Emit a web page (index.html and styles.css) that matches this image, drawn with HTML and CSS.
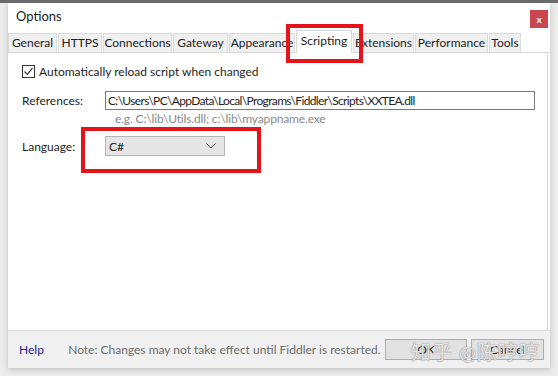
FILE: index.html
```html
<!DOCTYPE html>
<html>

<head>
    <title>Options</title>
    <meta name="viewport" content="width=device-width, initial-scale=1.0">
    <link rel="stylesheet" href="styles.css">
</head>

<body>
    <div class="window">
        <div class="titlebar">
            <span class="title">Options</span>
            <span class="close">x</span>
        </div>

        <div class="tabs">
            <span class="tab">General</span>
            <span class="tab">HTTPS</span>
            <span class="tab">Connections</span>
            <span class="tab">Gateway</span>
            <span class="tab">Appearance</span>
            <span class="tab active">Scripting</span>
            <span class="tab">Extensions</span>
            <span class="tab">Performance</span>
            <span class="tab">Tools</span>
        </div>

        <div class="panel">
            <label class="check-row">
                <span class="checkbox">
                    <svg width="11" height="11" viewBox="0 0 11 11">
                        <path d="M1.5 5.5 L4.3 8.3 L9.5 2.2" fill="none" stroke="#333" stroke-width="1.2"/>
                    </svg>
                </span>
                Automatically reload script when changed
            </label>

            <div class="field-row">
                <span class="field-label">References:</span>
                <span class="textbox">C:\Users\PC\AppData\Local\Programs\Fiddler\Scripts\XXTEA.dll</span>
            </div>
            <div class="hint">e.g. C:\lib\Utils.dll; c:\lib\myappname.exe</div>

            <div class="field-row lang-row">
                <span class="field-label">Language:</span>
                <span class="combo">
                    C#
                    <svg width="10" height="6" viewBox="0 0 10 6">
                        <path d="M0.5 0.5 L5 5 L9.5 0.5" fill="none" stroke="#444" stroke-width="1"/>
                    </svg>
                </span>
            </div>
        </div>

        <div class="footer">
            <span class="help">Help</span>
            <span class="note">Note: Changes may not take effect until Fiddler is restarted.</span>
            <span class="button ok">OK</span>
            <span class="button">Cancel</span>
        </div>

        <div class="mark mark-tab"></div>
        <div class="mark mark-lang"></div>
        <div class="watermark">知乎 @陈哼哼</div>
    </div>
</body>

</html>
```

FILE: styles.css
```css
body {
    margin: 0;
    padding: 0;
    width: 558px;
    height: 376px;
    overflow: hidden;
    background-color: #ececec;
    border-top: 3px solid #6b6b6b;
    box-sizing: border-box;
    font-family: Lato, "Noto Sans CJK SC", sans-serif;
    font-size: 12px;
    color: #1e1e1e;
}

.window {
    position: relative;
    margin: 0 8px;
    height: 365px;
    background-color: #fff;
    box-shadow: 0 2px 6px rgba(0, 0, 0, 0.18);
    display: flex;
    flex-direction: column;
}

.titlebar {
    height: 29px;
    display: flex;
    align-items: center;
    justify-content: space-between;
    padding-left: 8px;
    padding-right: 2px;
}

.title {
    font-size: 13px;
    color: #222;
    margin-top: -3px;
}

.close {
    width: 18px;
    height: 18px;
    background-color: #c9474d;
    color: #fff;
    font-size: 10px;
    font-weight: bold;
    display: flex;
    align-items: center;
    justify-content: center;
    margin-top: 2px;
}

.tabs {
    display: flex;
    height: 20px;
    align-items: flex-end;
    border-bottom: 1px solid #d9d9d9;
}

.tab {
    height: 19px;
    line-height: 18px;
    background-color: #f0f0f0;
    border: 1px solid #dadada;
    border-bottom: none;
    margin-right: 1px;
    box-sizing: border-box;
    white-space: nowrap;
    text-align: center;
    color: #222;
}

.tab:nth-child(1) { width: 49px; }
.tab:nth-child(2) { width: 44px; }
.tab:nth-child(3) { width: 69px; }
.tab:nth-child(4) { width: 55px; }
.tab:nth-child(5) { width: 66px; }
.tab:nth-child(6) { width: 56px; }
.tab:nth-child(7) { width: 61px; }
.tab:nth-child(8) { width: 73px; }
.tab:nth-child(9) { width: 32px; }

.tab.active {
    height: 23px;
    line-height: 20px;
    background-color: #fff;
    margin-bottom: -1px;
}

.panel {
    flex: 1;
    padding: 10px 12px 0 14px;
    border-right: 1px solid #d4d4d4;
    margin-right: 2px;
}

.check-row {
    display: flex;
    align-items: center;
    gap: 4px;
    height: 16px;
    margin-bottom: 11px;
}

.checkbox {
    width: 11px;
    height: 11px;
    border: 1px solid #333;
    display: flex;
    align-items: center;
    justify-content: center;
}

.field-row {
    display: flex;
    align-items: center;
    height: 20px;
}

.field-label {
    width: 83px;
}

.textbox {
    flex: 1;
    height: 19px;
    line-height: 18px;
    border: 1px solid #7a7a7a;
    box-sizing: border-box;
    padding-left: 2px;
    letter-spacing: -0.65px;
    white-space: nowrap;
    overflow: hidden;
}

.hint {
    color: #8a8a8a;
    margin-left: 93px;
    margin-top: 1px;
    height: 16px;
    letter-spacing: -0.15px;
}

.lang-row {
    margin-top: 9px;
}

.combo {
    width: 120px;
    height: 20px;
    box-sizing: border-box;
    background-color: #e5e5e5;
    border: 1px solid #b5b5b5;
    display: flex;
    align-items: center;
    justify-content: space-between;
    padding: 0 8px 0 3px;
}

.footer {
    height: 37px;
    background-color: #f0f0f0;
    border-top: 1px solid #dcdcdc;
    display: flex;
    align-items: center;
    padding: 0 6px 0 11px;
}

.help {
    color: #1c1c9a;
    width: 50px;
}

.note {
    color: #6d6d6d;
    flex: 1;
    white-space: nowrap;
}

.button {
    width: 74px;
    height: 21px;
    box-sizing: border-box;
    border: 1px solid #adadad;
    background-color: #e1e1e1;
    display: flex;
    align-items: center;
    justify-content: center;
    margin-left: 4px;
}

.button.ok {
    width: 84px;
}

.mark {
    position: absolute;
    border: 4px solid #e3151a;
    box-sizing: border-box;
}

.mark-tab {
    left: 278px;
    top: 21px;
    width: 77px;
    height: 39px;
}

.mark-lang {
    left: 73px;
    top: 124px;
    width: 180px;
    height: 46px;
}

.watermark {
    position: absolute;
    left: 403px;
    top: 334px;
    font-size: 20px;
    color: rgba(255, 255, 255, 0.8);
    text-shadow: 0 0 1px #8a8a8a, 0 0 1px #8a8a8a;
    letter-spacing: 1px;
    white-space: nowrap;
}
```
